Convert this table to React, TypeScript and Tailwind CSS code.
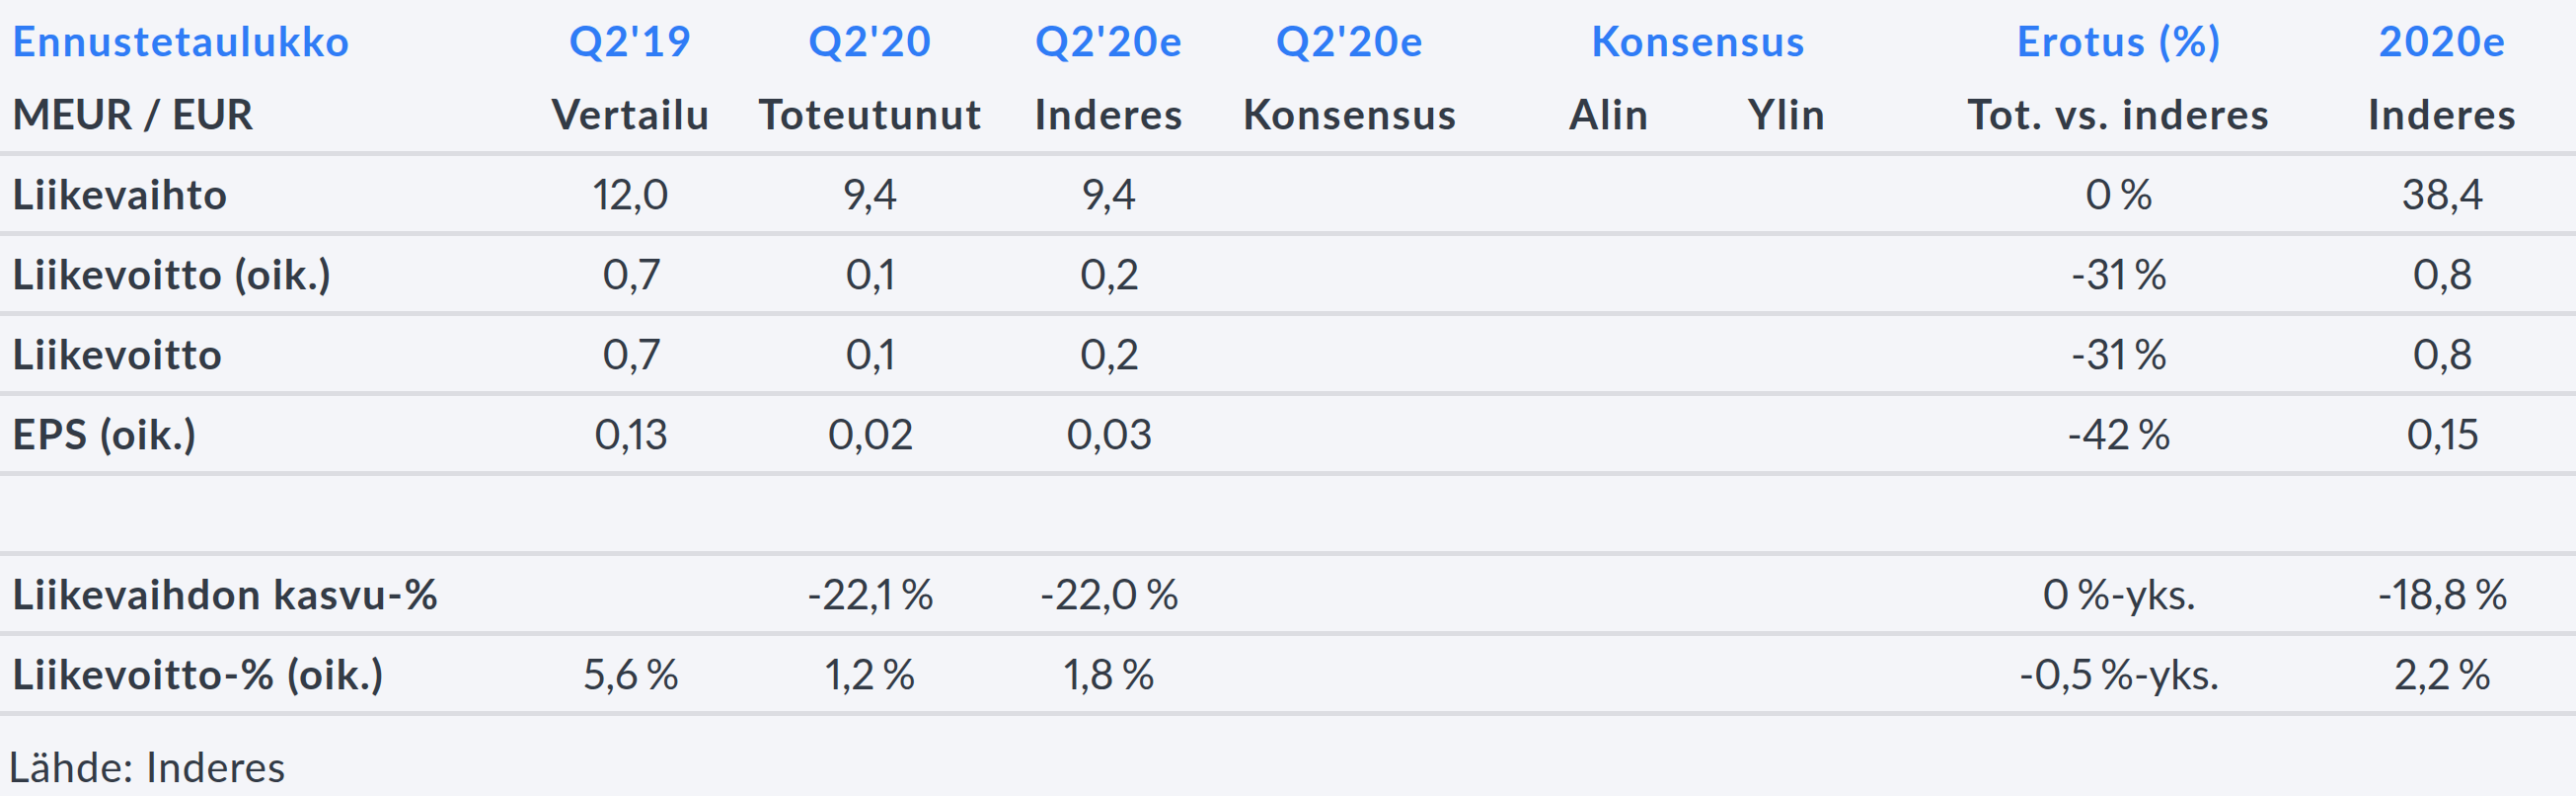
const widths = {
  label: "w-[518px]",
  c1: "w-[243px]",
  c2: "w-[242px]",
  c3: "w-[242px]",
  c4: "w-[246px]",
  gap: "w-[50px]",
  alin: "w-[180px]",
  ylin: "w-[180px]",
  diff: "w-[492px]",
  year: "w-[164px]",
}

type Row = {
  label: string
  vals: [string, string, string, string, string, string, string, string]
}

const rows: Row[] = [
  { label: "Liikevaihto", vals: ["12,0", "9,4", "9,4", "", "", "", "0 %", "38,4"] },
  { label: "Liikevoitto (oik.)", vals: ["0,7", "0,1", "0,2", "", "", "", "-31 %", "0,8"] },
  { label: "Liikevoitto", vals: ["0,7", "0,1", "0,2", "", "", "", "-31 %", "0,8"] },
  { label: "EPS (oik.)", vals: ["0,13", "0,02", "0,03", "", "", "", "-42 %", "0,15"] },
  { label: "", vals: ["", "", "", "", "", "", "", ""] },
  { label: "Liikevaihdon kasvu-%", vals: ["", "-22,1 %", "-22,0 %", "", "", "", "0 %-yks.", "-18,8 %"] },
  { label: "Liikevoitto-% (oik.)", vals: ["5,6 %", "1,2 %", "1,8 %", "", "", "", "-0,5 %-yks.", "2,2 %"] },
]

const valueCols = [widths.c1, widths.c2, widths.c3, widths.c4, widths.alin, widths.ylin, widths.diff, widths.year]

function Cells({ vals, className }: { vals: string[]; className: string }) {
  return (
    <>
      {vals.map((v, i) => (
        <div key={i} className="contents">
          {i === 4 && <div className={widths.gap} />}
          <div className={`${valueCols[i]} shrink-0 text-center whitespace-nowrap ${className}`}>{v}</div>
        </div>
      ))}
    </>
  )
}

export default function App() {
  return (
    <div
      className="w-[2610px] h-[806px] bg-[#f4f5f9] text-[#333b46] text-[42px] leading-none tracking-[1px] overflow-hidden"
      style={{ fontFamily: "Lato, 'Noto Sans', sans-serif" }}
    >
      {/* title row */}
      <div className="flex items-center h-[76px] pt-[5px] font-bold tracking-[2px] text-[#2f7cf6]">
        <div className={`${widths.label} shrink-0 pl-3`}>Ennustetaulukko</div>
        <div className={`${widths.c1} shrink-0 text-center`}>Q2'19</div>
        <div className={`${widths.c2} shrink-0 text-center`}>Q2'20</div>
        <div className={`${widths.c3} shrink-0 text-center`}>Q2'20e</div>
        <div className={`${widths.c4} shrink-0 text-center`}>Q2'20e</div>
        <div className={widths.gap} />
        <div className="w-[360px] shrink-0 text-center">Konsensus</div>
        <div className={`${widths.diff} shrink-0 text-center`}>Erotus (%)</div>
        <div className={`${widths.year} shrink-0 text-center`}>2020e</div>
      </div>

      {/* sub header */}
      <div className="flex items-center h-[77px] font-bold tracking-[2px] border-b-[5px] border-[#dcdde2] box-content">
        <div className={`${widths.label} shrink-0 pl-3 tracking-normal`}>MEUR / EUR</div>
        <Cells
          vals={["Vertailu", "Toteutunut", "Inderes", "Konsensus", "Alin", "Ylin", "Tot. vs. inderes", "Inderes"]}
          className=""
        />
      </div>

      {rows.map((r, i) => (
        <div key={i} className="flex items-center h-[76px] border-b-[5px] border-[#dcdde2] box-content">
          <div className={`${widths.label} shrink-0 pl-3 font-bold tracking-[1.5px]`}>{r.label}</div>
          <Cells vals={r.vals} className="tracking-normal proportional-nums [word-spacing:-3px]" />
        </div>
      ))}

      <div className="pl-2 pt-[30px]">Lähde: Inderes</div>
    </div>
  )
}
